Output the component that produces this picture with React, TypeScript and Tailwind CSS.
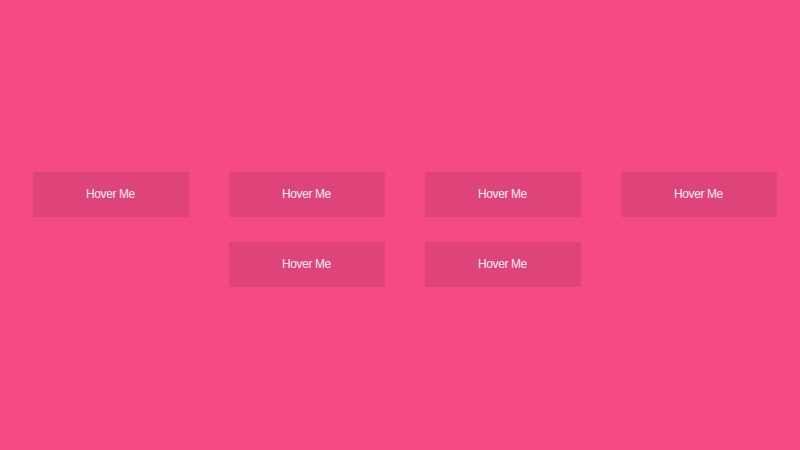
const labels = ["Hover Me", "Hover Me", "Hover Me", "Hover Me", "Hover Me", "Hover Me"];

const App = () => {
  return (
    <div className="min-h-[450px] w-full bg-[#f64a85] pl-[9px] pt-[8px] flex items-center justify-center font-['Liberation_Sans',Arial,sans-serif]">
      <div className="flex flex-wrap justify-center gap-x-[40px] gap-y-[25px] w-full">
        {labels.map((label, i) => (
          <button
            key={i}
            className="w-[156px] h-[45px] bg-[#de4479] text-[#fdeef4] text-[12px] tracking-[-0.4px] flex items-center justify-center cursor-pointer"
          >
            {label}
          </button>
        ))}
      </div>
    </div>
  );
};

export default App;
